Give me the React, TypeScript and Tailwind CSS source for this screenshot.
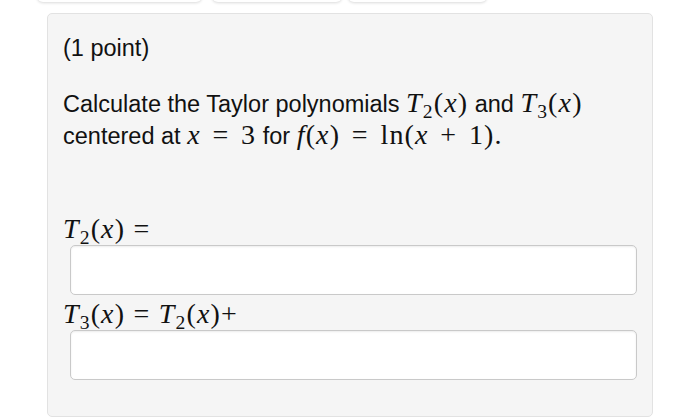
import React from 'react';

const SANS = "font-['Liberation_Sans',Arial,sans-serif]";
const SERIF = "font-['Liberation_Serif','Times_New_Roman',serif]";

const I: React.FC<{ children: React.ReactNode }> = ({ children }) => <span className="italic">{children}</span>;
const Sub: React.FC<{ children: React.ReactNode }> = ({ children }) => (
  <span className="text-[0.7em] align-[-0.3em] leading-none">{children}</span>
);
const Op: React.FC<{ children: React.ReactNode; wide?: boolean }> = ({ children, wide }) => (
  <span className={wide ? 'mx-[0.42em]' : 'mx-[0.3em]'}>{children}</span>
);

const Math: React.FC<{ children: React.ReactNode }> = ({ children }) => (
  <span className={`${SERIF} text-[28px] leading-none tracking-[0.04em] whitespace-nowrap`}>{children}</span>
);

const AnswerBox: React.FC = () => (
  <input
    type="text"
    className="ml-[7px] block h-[50px] w-[567px] rounded-[5px] border border-[#c9c9c9] bg-white shadow-[inset_0_1px_2px_rgba(0,0,0,0.08)] outline-none"
  />
);

const App: React.FC = () => {
  return (
    <div className={`${SANS} h-[419px] w-[700px] overflow-hidden bg-white text-[#111]`}>
      {/* bottoms of the cards above, cut off by the viewport */}
      <div className="ml-[37px] -mt-[20px] flex h-[22px] gap-[10px]">
        <div className="w-[165px] rounded-b-md bg-white shadow-[0_1px_3px_rgba(0,0,0,0.15)]" />
        <div className="w-[130px] rounded-b-md bg-white shadow-[0_1px_3px_rgba(0,0,0,0.15)]" />
        <div className="ml-[-4px] w-[139px] rounded-b-md bg-white shadow-[0_1px_3px_rgba(0,0,0,0.15)]" />
      </div>

      <div className="ml-[47px] mt-[11px] h-[404px] w-[606px] rounded-[5px] border border-[#e2e2e2] bg-[#f5f5f5] px-[15px] pt-[18px]">
        <p className="h-[32px] text-[23.5px] leading-[32px]">(1 point)</p>

        <div className="mt-[24px] text-[23.5px] leading-[32px]">
          <p className="h-[32px] whitespace-nowrap">
            Calculate the Taylor polynomials{' '}
            <Math>
              <I>T</I>
              <Sub>2</Sub>(<I>x</I>)
            </Math>{' '}
            and{' '}
            <Math>
              <I>T</I>
              <Sub>3</Sub>(<I>x</I>)
            </Math>
          </p>
          <p className="h-[32px] whitespace-nowrap">
            centered at{' '}
            <Math>
              <I>x</I>
              <Op wide>=</Op>3
            </Math>{' '}
            for{' '}
            <Math>
              <I>f</I>(<I>x</I>)<Op wide>=</Op>ln(<I>x</I>
              <Op wide>+</Op>1).
            </Math>
          </p>
        </div>

        <div className={`${SERIF} mt-[61px] h-[32px] text-[28px] leading-[32px] tracking-[0.04em]`}>
          <I>T</I>
          <Sub>2</Sub>(<I>x</I>)<Op>=</Op>
        </div>
        <AnswerBox />

        <div className={`${SERIF} mt-[3px] h-[32px] text-[28px] leading-[32px] tracking-[0.04em]`}>
          <I>T</I>
          <Sub>3</Sub>(<I>x</I>)<Op>=</Op>
          <I>T</I>
          <Sub>2</Sub>(<I>x</I>)+
        </div>
        <AnswerBox />
      </div>
    </div>
  );
};

export default App;
